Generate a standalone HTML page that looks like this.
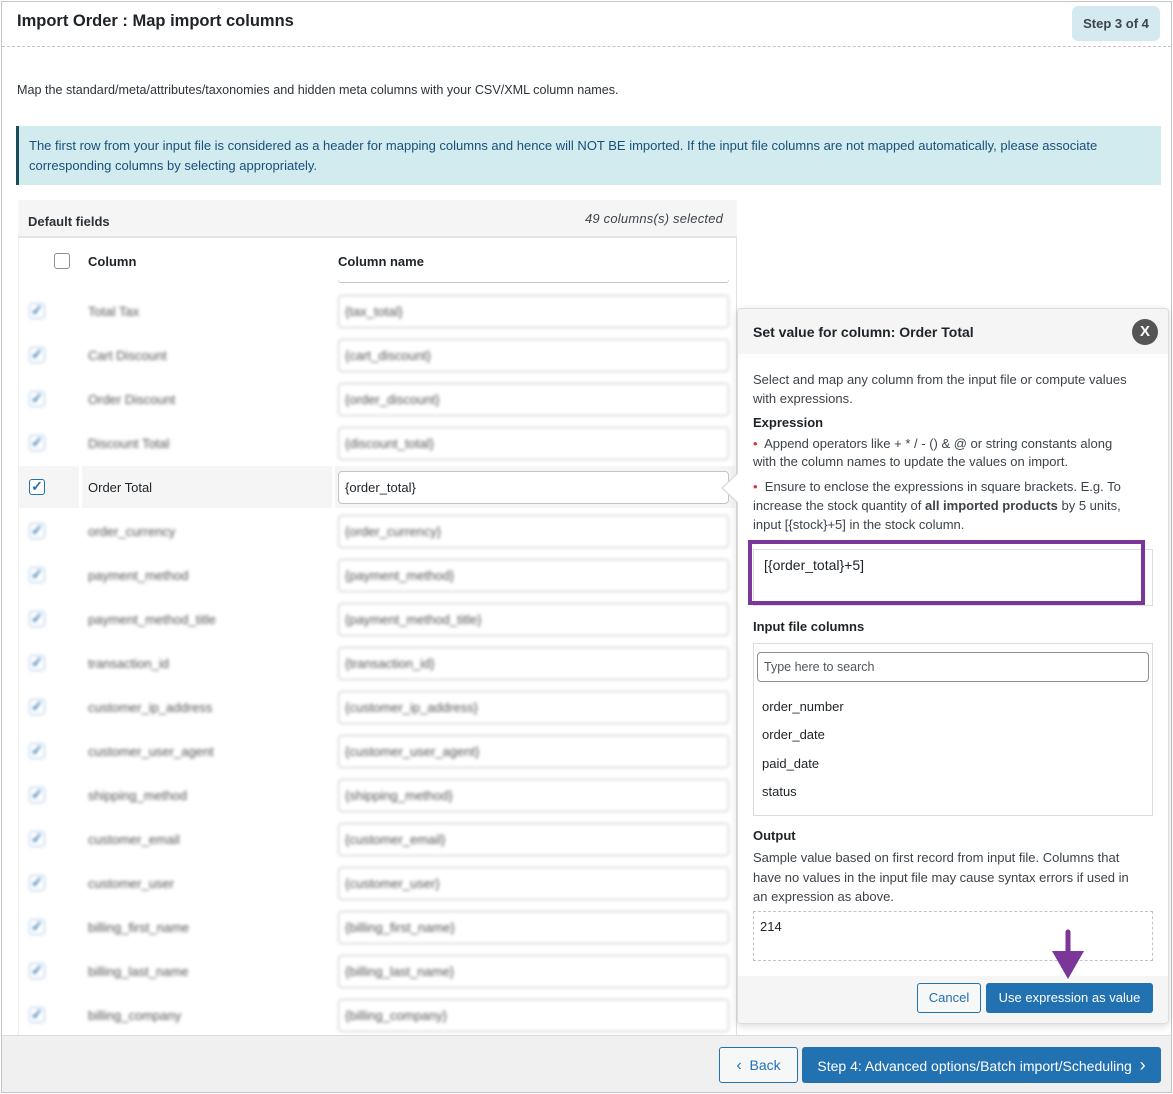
<!DOCTYPE html>
<html><head><meta charset="utf-8">
<style>
*{box-sizing:border-box;margin:0;padding:0}
body{width:1173px;height:1094px;background:#fff;font-family:"Liberation Sans",sans-serif;color:#1d2327;position:relative;overflow:hidden;font-size:13px}
.a{position:absolute}
.frame{left:1px;top:1px;width:1171px;height:1092px;border:1px solid #c3c4c7}
.blur{filter:blur(1.6px);color:#555}
.cb{width:16px;height:16px;border:1px solid #8c8f94;border-radius:3px;background:#fff}
.inp{left:338px;width:391px;height:33px;border:1px solid #c3c4c7;border-radius:4px;background:#fff;padding:8px 6px;font-size:13px}
.btn{border-radius:3px;font-size:13px;text-align:center}
</style></head><body>
<div class="a frame"></div>
<div class="a" style="left:17px;top:12px;font-size:16.5px;font-weight:bold;color:#1d2327">Import Order : Map import columns</div>
<div class="a" style="left:1072px;top:6px;width:88px;height:35px;background:#d5eaf0;border-radius:6px;font-size:13px;font-weight:bold;color:#3c434a;text-align:center;line-height:35px">Step 3 of 4</div>
<div class="a" style="left:2px;top:46px;width:1169px;border-top:1px dashed #c3c4c7"></div>
<div class="a" style="left:17px;top:83px;font-size:12.6px;color:#2c3338">Map the standard/meta/attributes/taxonomies and hidden meta columns with your CSV/XML column names.</div>
<div class="a" style="left:16px;top:126px;width:1145px;height:59px;background:#d1ebef;border-left:3px solid #1d4c5c;color:#1b4f7a;padding:10px 40px 0 10px;line-height:20px;font-size:13px">The first row from your input file is considered as a header for mapping columns and hence will NOT BE imported. If the input file columns are not mapped automatically, please associate corresponding columns by selecting appropriately.</div>

<div class="a" style="left:18px;top:200px;width:719px;height:38px;background:#f5f5f5;border-bottom:2px solid #e4e4e4"></div>
<div class="a" style="left:28px;top:214px;font-weight:bold;color:#2c3338">Default fields</div>
<div class="a" style="left:585px;top:211px;font-style:italic;color:#3c434a;letter-spacing:.2px">49 columns(s) selected</div>
<div class="a" style="left:736px;top:238px;width:1px;height:797px;background:#e0e0e0"></div>
<div class="a" style="left:18px;top:238px;width:1px;height:797px;background:#eee"></div>
<div class="a cb" style="left:54px;top:253px"></div>
<div class="a" style="left:88px;top:254px;font-weight:bold">Column</div>
<div class="a" style="left:338px;top:254px;font-weight:bold">Column name</div>
<div class="a" style="left:338px;top:280px;width:391px;height:3px;border-bottom:1px solid #c3c4c7;border-left:1px solid #ddd;border-right:1px solid #ddd;border-radius:0 0 4px 4px"></div>

<div class="a" style="left:19px;top:466px;width:60px;height:42px;background:#f5f5f5"></div>
<div class="a" style="left:82px;top:466px;width:250px;height:42px;background:#f5f5f5"></div>
<div class="a" style="left:335px;top:466px;width:400px;height:42px;background:#f5f5f5"></div>

<div id="rows"></div>
<script>
var r=[["Total Tax","{tax_total}"],["Cart Discount","{cart_discount}"],["Order Discount","{order_discount}"],["Discount Total","{discount_total}"],["Order Total","{order_total}"],["order_currency","{order_currency}"],["payment_method","{payment_method}"],["payment_method_title","{payment_method_title}"],["transaction_id","{transaction_id}"],["customer_ip_address","{customer_ip_address}"],["customer_user_agent","{customer_user_agent}"],["shipping_method","{shipping_method}"],["customer_email","{customer_email}"],["customer_user","{customer_user}"],["billing_first_name","{billing_first_name}"],["billing_last_name","{billing_last_name}"],["billing_company","{billing_company}"]];
var h="";
r.forEach(function(x,i){var c=311+44*i;var act=i==4;var b=act?"":" blur";
h+='<div class="a'+b+'" style="left:29px;top:'+(c-8)+'px;width:16px;height:16px;border:1px solid '+(act?'#2271b1':'#a7c8e6')+';border-radius:3px;background:#fff;color:#2271b1;font-size:14px;line-height:13px;text-align:center;font-weight:bold">&#10003;</div>';
h+='<div class="a'+b+'" style="left:88px;top:'+(c-7)+'px;font-size:13px">'+x[0]+'</div>';
h+='<div class="a inp'+b+'" style="top:'+(c-16)+'px;'+(act?'color:#1d2327':'')+'">'+x[1]+'</div>';});
document.getElementById("rows").innerHTML=h;
</script>

<!-- popup -->
<div class="a" style="left:737px;top:308px;width:432px;height:716px;background:#fff;border:1px solid #dcdcde;border-radius:4px;box-shadow:0 2px 8px rgba(0,0,0,.15)"></div>
<div class="a" style="left:721px;top:472px;width:0;height:0;border-top:16px solid transparent;border-bottom:16px solid transparent;border-right:17px solid #dcdcde"></div>
<div class="a" style="left:723px;top:473px;width:0;height:0;border-top:15px solid transparent;border-bottom:15px solid transparent;border-right:16px solid #fff"></div>
<div class="a" style="left:738px;top:309px;width:430px;height:45px;background:#f5f5f5;border-radius:4px 4px 0 0"></div>
<div class="a" style="left:753px;top:324px;font-size:14px;font-weight:bold">Set value for column: Order Total</div>
<div class="a" style="left:1132px;top:319px;width:26px;height:26px;border-radius:50%;background:#555;color:#fff;font-weight:bold;font-size:15px;text-align:center;line-height:26px">X</div>
<div class="a" style="left:753px;top:370px;width:400px;line-height:19px;color:#3c434a">Select and map any column from the input file or compute values with expressions.</div>
<div class="a" style="left:753px;top:415px;font-weight:bold">Expression</div>
<div class="a" style="left:753px;top:435px;width:385px;line-height:18px;color:#3c434a"><span style="color:#d63638">&#8226;</span>&nbsp; Append operators like + * / - () &amp; @ or string constants along with the column names to update the values on import.</div>
<div class="a" style="left:753px;top:477px;width:392px;line-height:19px;color:#3c434a"><span style="color:#d63638">&#8226;</span>&nbsp; Ensure to enclose the expressions in square brackets. E.g. To increase the stock quantity of <b>all imported products</b> by 5 units, input [{stock}+5] in the stock column.</div>
<div class="a" style="left:753px;top:549px;width:400px;height:57px;border:1px solid #ddd"></div>
<div class="a" style="left:748px;top:540px;width:397px;height:65px;border:4px solid #7b3699"></div>
<div class="a" style="left:764px;top:557px;font-size:14px">[{order_total}+5]</div>
<div class="a" style="left:753px;top:619px;font-weight:bold">Input file columns</div>
<div class="a" style="left:753px;top:643px;width:400px;height:173px;border:1px solid #dcdcde"></div>
<div class="a" style="left:757px;top:652px;width:392px;height:30px;border:1px solid #8c8f94;border-radius:4px;padding:7px 6px;font-size:12.5px;color:#50575e">Type here to search</div>
<div class="a" style="left:762px;top:699px">order_number</div>
<div class="a" style="left:762px;top:727px">order_date</div>
<div class="a" style="left:762px;top:756px">paid_date</div>
<div class="a" style="left:762px;top:784px">status</div>
<div class="a" style="left:753px;top:828px;font-weight:bold">Output</div>
<div class="a" style="left:753px;top:848px;width:392px;line-height:19.5px;color:#3c434a">Sample value based on first record from input file. Columns that have no values in the input file may cause syntax errors if used in an expression as above.</div>
<div class="a" style="left:753px;top:911px;width:400px;height:50px;border:1px dashed #c3c4c7"></div>
<div class="a" style="left:760px;top:919px">214</div>
<div class="a" style="left:738px;top:976px;width:430px;height:47px;background:#f5f5f5;border-radius:0 0 4px 4px"></div>
<div class="a btn" style="left:917px;top:983px;width:64px;height:30px;border:1px solid #2271b1;color:#2271b1;background:#f6f7f7;line-height:28px">Cancel</div>
<div class="a btn" style="left:986px;top:983px;width:167px;height:30px;background:#2271b1;color:#fff;line-height:30px">Use expression as value</div>
<svg class="a" style="left:1050px;top:929px" width="36" height="52"><line x1="18" y1="3" x2="18" y2="34" stroke="#7b3699" stroke-width="5" stroke-linecap="round"/><polygon points="2,22 34,22 18,50" fill="#7b3699"/></svg>

<!-- footer -->
<div class="a" style="left:2px;top:1035px;width:1169px;height:57px;background:#f0f0f1;border-top:1px solid #dcdcde"></div>
<div class="a btn" style="left:719px;top:1047px;width:79px;height:36px;border:1px solid #2271b1;background:#f6f7f7;color:#2271b1;line-height:34px;font-size:14px"><span style="font-size:16px">&#8249;</span>&nbsp; Back</div>
<div class="a btn" style="left:802px;top:1047px;width:359px;height:36px;background:#2271b1;color:#fff;line-height:36px;font-size:14px">Step 4: Advanced options/Batch import/Scheduling &nbsp;<span style="font-size:18px">&#8250;</span></div>
</body></html>
